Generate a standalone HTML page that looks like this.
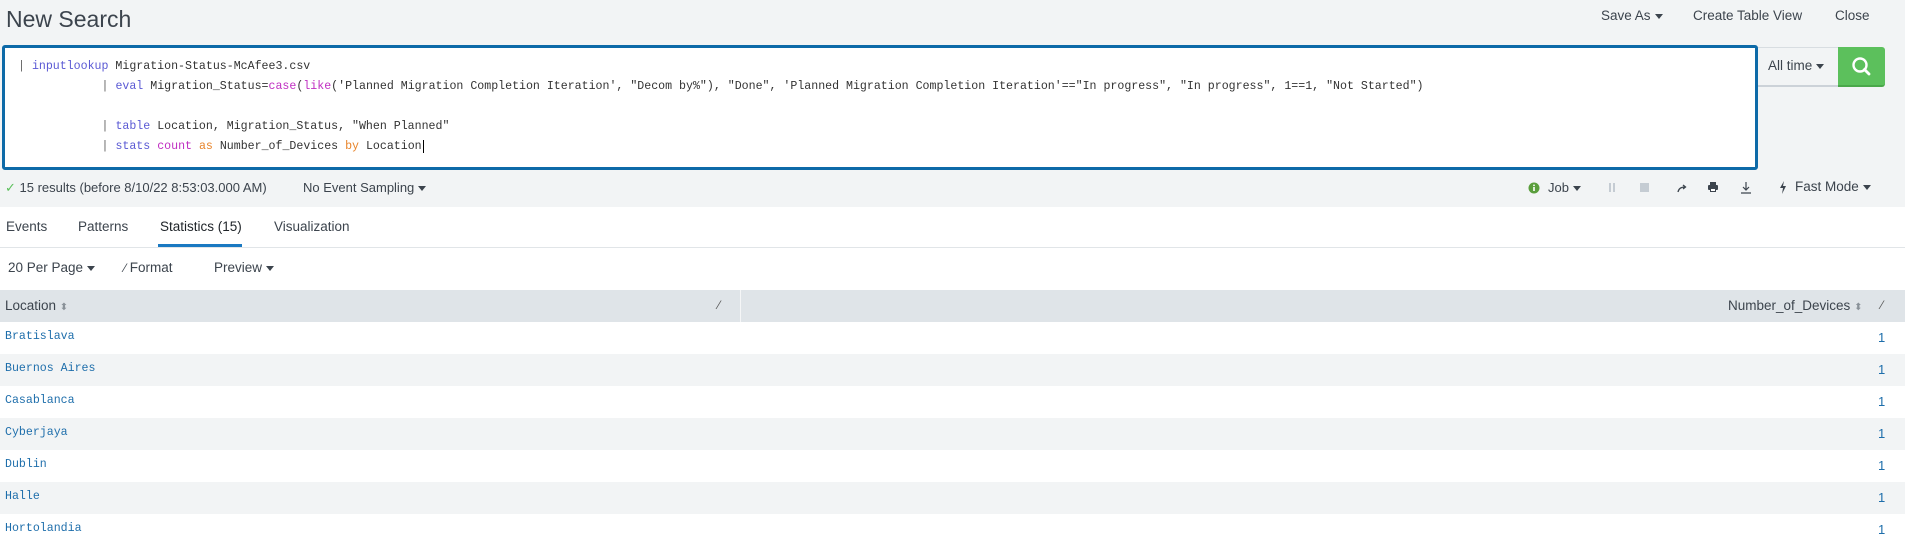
<!DOCTYPE html>
<html><head><meta charset="utf-8"><style>
*{margin:0;padding:0;box-sizing:border-box}
body{width:1905px;height:543px;overflow:hidden;background:#fff;font-family:"Liberation Sans",sans-serif;color:#3c444d;position:relative}
.a{position:absolute;white-space:nowrap}
.top{position:absolute;left:0;top:0;width:1905px;height:207px;background:#f2f4f5}
.box{position:absolute;left:2px;top:45px;width:1756px;height:125px;border:3px solid #0d6aa8;border-radius:3px;background:#fff}
.code{position:absolute;left:13px;font-family:"Liberation Mono",monospace;font-size:11.6px;color:#333;white-space:pre;line-height:20px}
.k{color:#5a59d4}.f{color:#c02fc2}.o{color:#e8842a}.p{color:#666}
.ui{font-size:13.5px;color:#3c444d}
.car{display:inline-block;width:0;height:0;border-left:4px solid transparent;border-right:4px solid transparent;border-top:5px solid #3c444d;vertical-align:middle;margin-left:4px}
.row{position:absolute;left:0;width:1905px;height:32px}
.mono{font-family:"Liberation Mono",monospace;font-size:11.6px;color:#1e6eab}
.one{font-size:13px;color:#1e6eab}
</style></head><body>
<div class="top"></div>
<div class="a" style="left:6px;top:6px;font-size:23px;color:#3c444d">New Search</div>
<div class="a ui" style="left:1601px;top:8px">Save As<span class="car"></span></div>
<div class="a ui" style="left:1693px;top:8px">Create Table View</div>
<div class="a ui" style="left:1835px;top:8px">Close</div>
<div class="box">
<div class="code" style="top:9px"><span class="p">|</span> <span class="k">inputlookup</span> Migration-Status-McAfee3.csv
            <span class="p">|</span> <span class="k">eval</span> Migration_Status=<span class="f">case</span>(<span class="f">like</span>('Planned Migration Completion Iteration', "Decom by%"), "Done", 'Planned Migration Completion Iteration'=="In progress", "In progress", 1==1, "Not Started")

            <span class="p">|</span> <span class="k">table</span> Location, Migration_Status, "When Planned"
            <span class="p">|</span> <span class="k">stats</span> <span class="f">count</span> <span class="o">as</span> Number_of_Devices <span class="o">by</span> Location<span style="border-left:1px solid #000;margin-left:1px"></span></div>
</div>
<div class="a" style="left:1758px;top:47px;width:80px;height:40px;background:#f2f4f5;border-top:1px solid #d8dde1;border-bottom:2px solid #ccd2d8"></div>
<div class="a ui" style="left:1768px;top:58px">All time<span class="car"></span></div>
<div class="a" style="left:1838px;top:47px;width:47px;height:40px;background:#5cc05c;border-radius:0 3px 3px 0;border-bottom:2px solid #4aa84a">
<svg width="47" height="40"><circle cx="22" cy="18" r="6.5" fill="none" stroke="#fff" stroke-width="2.4"/><line x1="26.5" y1="22.5" x2="31" y2="27" stroke="#fff" stroke-width="2.8" stroke-linecap="round"/></svg></div>
<div class="a ui" style="left:5px;top:180px;font-size:13px"><span style="color:#5cc05c">✓</span> 15 results (before 8/10/22 8:53:03.000 AM)</div>
<div class="a ui" style="left:303px;top:180px;font-size:13px">No Event Sampling<span class="car"></span></div>
<svg class="a" style="left:1528px;top:182px" width="12" height="12"><circle cx="6" cy="6" r="5.5" fill="#5a9e3c"/><rect x="5.2" y="5" width="1.6" height="4" fill="#fff"/><rect x="5.2" y="2.6" width="1.6" height="1.5" fill="#fff"/></svg>
<div class="a ui" style="left:1548px;top:180px;font-size:13px">Job<span class="car"></span></div>
<div class="a" style="left:1609px;top:183px;width:2px;height:9px;background:#c5ccd3"></div>
<div class="a" style="left:1613px;top:183px;width:2px;height:9px;background:#c5ccd3"></div>
<div class="a" style="left:1640px;top:183px;width:9px;height:9px;background:#c5ccd3"></div>
<svg class="a" style="left:1676px;top:182px" width="12" height="12"><path d="M2 10 Q3 5 9 5 M7 3 L9.5 5 L7 7" fill="none" stroke="#3c444d" stroke-width="1.3"/></svg>
<svg class="a" style="left:1707px;top:181px" width="12" height="12"><rect x="3" y="1" width="6" height="3" fill="#3c444d"/><rect x="1" y="4" width="10" height="5" rx="1" fill="#3c444d"/><rect x="3" y="8" width="6" height="3" fill="#3c444d"/><rect x="4" y="8" width="4" height="2" fill="#fff"/></svg>
<svg class="a" style="left:1740px;top:181px" width="12" height="13"><path d="M6 1 V9 M3 6 L6 9 L9 6 M1 12 H11" fill="none" stroke="#3c444d" stroke-width="1.2"/></svg>
<svg class="a" style="left:1779px;top:181px" width="8" height="13"><path d="M5 0 L1 7 H4 L3 13 L7 5 H4 Z" fill="#3c444d"/></svg>
<div class="a ui" style="left:1795px;top:179px;font-size:13.5px">Fast Mode<span class="car"></span></div>
<div class="a ui" style="left:6px;top:219px">Events</div>
<div class="a ui" style="left:78px;top:219px">Patterns</div>
<div class="a ui" style="left:160px;top:219px;color:#1e2328">Statistics (15)</div>
<div class="a ui" style="left:274px;top:219px">Visualization</div>
<div class="a" style="left:158px;top:244px;width:84px;height:3px;background:#1a79c2"></div>
<div class="a" style="left:0;top:247px;width:1905px;height:1px;background:#e1e5e8"></div>
<div class="a ui" style="left:8px;top:260px">20 Per Page<span class="car"></span></div>
<div class="a ui" style="left:124px;top:260px"><span style="font-size:12px">⁄</span> Format</div>
<div class="a ui" style="left:214px;top:260px">Preview<span class="car"></span></div>
<div class="a" style="left:0;top:290px;width:1905px;height:32px;background:#dfe4e8"></div>
<div class="a" style="left:740px;top:290px;width:1px;height:32px;background:#f5f6f7"></div>
<div class="a ui" style="left:5px;top:298px">Location <span style="color:#8a9299;font-size:10px">⬍</span></div>
<div class="a" style="left:718px;top:298px;color:#555;font-size:12px">⁄</div>
<div class="a ui" style="left:1728px;top:298px">Number_of_Devices <span style="color:#8a9299;font-size:10px">⬍</span></div>
<div class="a" style="left:1881px;top:298px;color:#555;font-size:12px">⁄</div>
<div class="row" style="top:322px;background:#fff"></div>
<div class="row" style="top:354px;background:#f2f4f5"></div>
<div class="row" style="top:386px;background:#fff"></div>
<div class="row" style="top:418px;background:#f2f4f5"></div>
<div class="row" style="top:450px;background:#fff"></div>
<div class="row" style="top:482px;background:#f2f4f5"></div>
<div class="row" style="top:514px;background:#fff"></div>
<div class="a mono" style="left:5px;top:330px">Bratislava</div>
<div class="a mono" style="left:5px;top:362px">Buernos Aires</div>
<div class="a mono" style="left:5px;top:394px">Casablanca</div>
<div class="a mono" style="left:5px;top:426px">Cyberjaya</div>
<div class="a mono" style="left:5px;top:458px">Dublin</div>
<div class="a mono" style="left:5px;top:490px">Halle</div>
<div class="a mono" style="left:5px;top:522px">Hortolandia</div>
<div class="a one" style="left:1878px;top:330px">1</div>
<div class="a one" style="left:1878px;top:362px">1</div>
<div class="a one" style="left:1878px;top:394px">1</div>
<div class="a one" style="left:1878px;top:426px">1</div>
<div class="a one" style="left:1878px;top:458px">1</div>
<div class="a one" style="left:1878px;top:490px">1</div>
<div class="a one" style="left:1878px;top:522px">1</div>
</body></html>
